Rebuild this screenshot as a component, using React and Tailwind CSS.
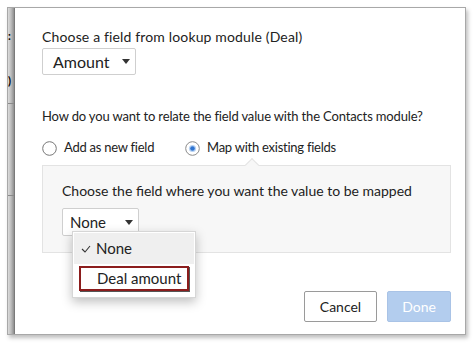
import React from 'react';

const font = { fontFamily: 'Lato, "Open Sans", sans-serif' };

const Caret = () => (
    <svg width="8" height="5" viewBox="0 0 8 5" className="text-[#333]">
        <path d="M0 0 L8 0 L4 5 Z" fill="currentColor" />
    </svg>
);

const Radio = ({ checked }) => (
    <svg width="15" height="15" viewBox="0 0 15 15">
        <circle cx="7.5" cy="7.5" r="6.8" fill="#fff" stroke={checked ? '#8a8a8a' : '#777'} strokeWidth="1" />
        {checked && <circle cx="7.5" cy="7.5" r="3.6" fill="#b9d3f3" />}
        {checked && <circle cx="7.5" cy="7.5" r="2.3" fill="#2f74d0" />}
    </svg>
);

const App = () => {
    return (
        <div className="w-[474px] h-[344px] bg-white overflow-hidden text-[#222]" style={font}>
            <div className="ml-[7px] mt-[7px] w-[459px] h-[328px] border border-[#a8a8a8] flex bg-white shadow-[2px_3px_4px_rgba(0,0,0,0.25)]">
                {/* page behind the dialog */}
                <div className="relative w-[7px] h-full overflow-hidden bg-gradient-to-r from-[#dcdcdc] via-[#bdbdbd] to-[#8f8f8f] border-r border-[#7a7a7a]">
                    <span className="absolute left-0 top-[21px] text-[11px] leading-[14px] font-bold text-black">:</span>
                    <span className="absolute left-0 top-[66px] text-[11px] leading-[14px] font-bold text-black">)</span>
                    <div className="absolute left-0 top-[95px] w-full h-px bg-[#8a8a8a]" />
                    <div className="absolute left-0 top-[187px] w-full h-px bg-[#8a8a8a]" />
                </div>

                <div className="flex-1 pl-[27px] pr-[10px] pt-[19px]">
                    <p className="text-[14px] leading-[20px] tracking-[0.15px] whitespace-nowrap">Choose a field from lookup module (Deal)</p>
                    <div className="mt-[1px] w-[94px] h-[27px] border border-[#cfcfcf] rounded-[2px] flex items-center justify-between pl-[10px] pr-[5px] text-[16px]">
                        <span>Amount</span>
                        <Caret />
                    </div>

                    <p className="mt-[31px] text-[13px] leading-[20px] tracking-[-0.15px] whitespace-nowrap">How do you want to relate the field value with the Contacts module?</p>

                    <div className="mt-[12px] flex items-center h-[20px] text-[13px] tracking-[-0.25px] whitespace-nowrap">
                        <Radio />
                        <span className="ml-[7px] w-[90px]">Add as new field</span>
                        <span className="ml-[31px]"><Radio checked /></span>
                        <span className="ml-[7px]">Map with existing fields</span>
                    </div>

                    <div className="relative mt-[7px] w-[409px] bg-[#f7f7f7] border border-[#e3e3e3] pl-[19px] pt-[15px] pb-[16px]">
                        <div className="absolute top-[-6px] left-[204px] w-[10px] h-[10px] bg-[#f7f7f7] border-l border-t border-[#e3e3e3] rotate-45" />
                        <p className="text-[14px] leading-[20px] whitespace-nowrap">Choose the field where you want the value to be mapped</p>
                        <div className="relative mt-[7px] w-[77px] h-[28px] bg-white border border-[#cfcfcf] rounded-[2px] flex items-center justify-between pl-[7px] pr-[5px] text-[15px]">
                            <span>None</span>
                            <Caret />
                            <div className="absolute z-10 left-[9px] top-[22px] w-[124px] bg-white border border-[#d6d6d6] shadow-[0_4px_10px_rgba(0,0,0,0.25)] py-px">
                                <div className="mx-px h-[31px] bg-[#efefef] flex items-center pl-[7px] text-[15px]">
                                    <svg width="10" height="8" viewBox="0 0 10 8" className="mr-[5px]">
                                        <path d="M1 4 L4 7 L9 1" fill="none" stroke="#333" strokeWidth="1.1" />
                                    </svg>
                                    None
                                </div>
                                <div className="px-[6px] pt-[2px] pb-[5px]">
                                    <div className="h-[25px] border-2 border-[#8b1c1c] shadow-[1px_1px_0_#555] flex items-center pl-[16px] text-[15px] text-[#222]">
                                        Deal amount
                                    </div>
                                </div>
                            </div>
                        </div>
                    </div>

                    <div className="mt-[38px] w-[409px] flex justify-end gap-[10px] text-[14px]">
                        <div className="w-[73px] h-[31px] border border-[#9a9a9a] rounded-[2px] flex items-center justify-center bg-white">Cancel</div>
                        <div className="w-[64px] h-[31px] border border-[#a9c3e6] rounded-[2px] flex items-center justify-center bg-[#b3cdee] text-white">Done</div>
                    </div>
                </div>
            </div>
        </div>
    );
};

export default App;
